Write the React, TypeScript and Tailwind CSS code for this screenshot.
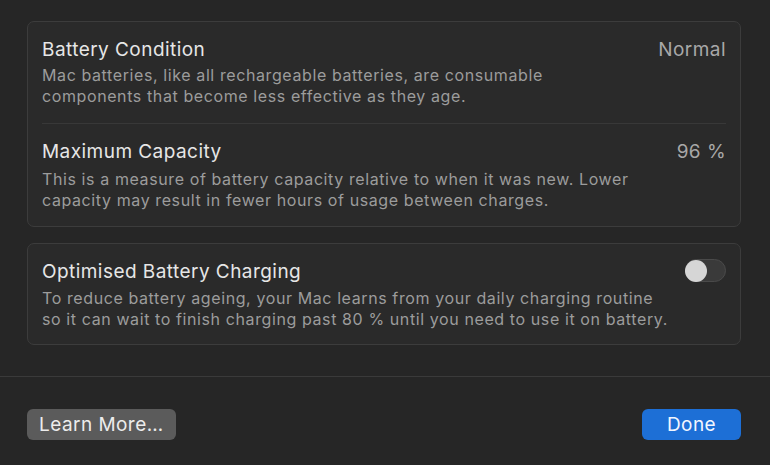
import React from "react";

function Row({
  title,
  value,
  desc,
  divider,
  pt,
  pb,
  mt,
}: {
  title: string;
  value?: React.ReactNode;
  desc: string[];
  divider?: boolean;
  pt: string;
  pb: string;
  mt: string;
}) {
  return (
    <div className={`flex justify-between ${divider ? "border-b border-[#383838]" : ""} ${pt} ${pb}`}>
      <div className="flex flex-col">
        <div className="text-[19px] leading-[24px] tracking-[0.45px] text-[#e6e6e6]">{title}</div>
        <div className={`text-[16px] leading-[21px] tracking-[0.6px] text-[#9c9c9c] ${mt}`}>
          {desc.map((d, i) => (
            <div key={i}>{d}</div>
          ))}
        </div>
      </div>
      <div className="text-[19px] leading-[24px] tracking-[0.45px] text-[#a8a8a8]">{value}</div>
    </div>
  );
}

export default function App() {
  return (
    <div
      className="w-[770px] h-[465px] bg-[#262626] flex flex-col overflow-hidden"
      style={{ fontFamily: "Inter, 'Noto Sans', sans-serif" }}
    >
      <div className="pl-[27px] pr-[29px] pt-[21px] flex flex-col gap-[16px]">
        <div className="rounded-[7px] border border-[#3c3c3c] bg-[#2a2a2a] px-[14px]">
          <Row
            title="Battery Condition"
            value="Normal"
            divider
            pt="pt-[16px]"
            pb="pb-[16px]"
            mt="mt-[3px]"
            desc={[
              "Mac batteries, like all rechargeable batteries, are consumable",
              "components that become less effective as they age.",
            ]}
          />
          <Row
            title="Maximum Capacity"
            value="96 %"
            pt="pt-[16px]"
            pb="pb-[15px]"
            mt="mt-[5px]"
            desc={[
              "This is a measure of battery capacity relative to when it was new. Lower",
              "capacity may result in fewer hours of usage between charges.",
            ]}
          />
        </div>
        <div className="rounded-[7px] border border-[#3c3c3c] bg-[#2a2a2a] px-[14px]">
          <Row
            title="Optimised Battery Charging"
            pt="pt-[16px]"
            pb="pb-[14px]"
            mt="mt-[4px]"
            value={
              <div className="-mt-[1px] w-[41px] h-[23px] rounded-full bg-[#3a3a3a] border border-[#4a4a4a] flex items-center">
                <div className="w-[22px] h-[22px] rounded-full bg-[#d6d6d6] -ml-px" />
              </div>
            }
            desc={[
              "To reduce battery ageing, your Mac learns from your daily charging routine",
              "so it can wait to finish charging past 80 % until you need to use it on battery.",
            ]}
          />
        </div>
      </div>
      <div className="mt-[31px] border-t border-[#3a3a3a]" />
      <div className="pl-[27px] pr-[29px] pt-[32px] flex justify-between">
        <button className="h-[31px] px-[12px] rounded-[6px] bg-[#5b5b5b] text-[#ececec] text-[19px] leading-[24px] tracking-[0.45px]">
          Learn More…
        </button>
        <button className="h-[31px] w-[99px] rounded-[6px] bg-[#1d6fd6] text-[#f2f6ff] text-[19px] leading-[24px] tracking-[0.45px]">
          Done
        </button>
      </div>
    </div>
  );
}
